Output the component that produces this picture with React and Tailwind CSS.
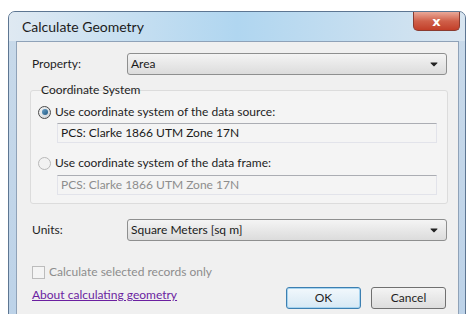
import { FaCaretDown } from 'react-icons/fa'

function Combo({ value }) {
    return (
        <div className="flex-1 h-[22px] flex items-center justify-between pl-[3px] pr-[6px] rounded-[3px] border border-[#8e8f8f] bg-gradient-to-b from-[#f4f4f4] to-[#dcdcdc] text-[#1a1a1a]">
            <span>{value}</span>
            <FaCaretDown className="h-3 w-3 text-[#222]" />
        </div>
    )
}

function TextBox({ value, disabled }) {
    return (
        <div className={`ml-[31px] mr-[10px] h-[20px] flex items-center pl-[3px] border border-[#e2e3ea] border-t-[#abadb3] bg-[#f4f4f4] ${disabled ? 'text-[#8d8d8d]' : 'text-[#1a1a1a]'}`}>
            {value}
        </div>
    )
}

export default function App() {
    return (
        <div className="w-[474px] h-[314px] overflow-hidden bg-white pl-[8px] pt-[11px] text-[12px] font-['Lato',sans-serif]">
            <div className="w-[458px] h-[320px] rounded-t-[7px] border border-[#5d7692] bg-gradient-to-b from-[#c9daea] to-[#bcd2e8] flex flex-col">
                {/* title bar */}
                <div className="h-[29px] shrink-0 flex items-start justify-between rounded-t-[6px] bg-gradient-to-r from-[#dfe9f2] via-[#b0d6f0] to-[#d8e5f0]">
                    <span className="pl-[13px] pt-[6px] text-[14px] text-[#1c1c1c] leading-[18px]">Calculate Geometry</span>
                    <div className="mr-[5px] w-[47px] h-[19px] flex items-center justify-center rounded-b-[5px] border border-t-0 border-[#8a3b30] bg-gradient-to-b from-[#e9a898] via-[#d0604a] to-[#c23e28] text-white font-bold text-[13px] leading-none font-['DejaVu_Sans',sans-serif]">
                        x
                    </div>
                </div>

                {/* client area */}
                <div className="flex-1 ml-[7px] mr-[6px] border border-[#8fa2b8] bg-[#f0f0f0] pl-[15px] pr-[11px] pt-[11px] text-[#1e1e1e]">
                    <div className="flex items-center">
                        <span className="w-[95px]">Property:</span>
                        <Combo value="Area" />
                    </div>

                    <div className="relative mt-[15px] -ml-[2px] mr-[-1px] h-[114px] rounded-[3px] border border-[#dcdcdc] bg-[#f4f4f4] pt-[13px] pl-[7px]">
                        <span className="absolute -top-[9px] left-[9px] px-[1px] leading-[16px] text-[#1e1e1e]">Coordinate System</span>
                        <div className="flex items-center gap-[4px] leading-[16px]">
                            <span className="w-[13px] h-[13px] rounded-full border border-[#4a4a4a] bg-gradient-to-br from-[#f5f5f5] to-[#cfd3d8] flex items-center justify-center">
                                <span className="w-[6px] h-[6px] rounded-full bg-gradient-to-br from-[#6aa1c8] to-[#1e5a84]" />
                            </span>
                            <span>Use coordinate system of the data source:</span>
                        </div>
                        <div className="mt-[3px] -ml-[12px]">
                            <TextBox value="PCS: Clarke 1866 UTM Zone 17N" />
                        </div>
                        <div className="mt-[12px] flex items-center gap-[4px] leading-[16px]">
                            <span className="w-[13px] h-[13px] rounded-full border border-[#b8b8b8] bg-[#f2f2f2]" />
                            <span>Use coordinate system of the data frame:</span>
                        </div>
                        <div className="mt-[4px] -ml-[12px]">
                            <TextBox value="PCS: Clarke 1866 UTM Zone 17N" disabled />
                        </div>
                    </div>

                    <div className="mt-[15px] flex items-center">
                        <span className="w-[95px]">Units:</span>
                        <Combo value="Square Meters [sq m]" />
                    </div>

                    <div className="mt-[23px] flex items-start justify-between">
                        <div className="flex flex-col">
                            <div className="flex items-center gap-[4px] text-[#8d8d8d] leading-[16px]">
                                <span className="w-[13px] h-[13px] border border-[#bcbcbc] bg-[#f4f4f4]" />
                                <span>Calculate selected records only</span>
                            </div>
                            <span className="mt-[7px] text-[#6b1fa0] underline leading-[16px]">About calculating geometry</span>
                        </div>
                        <div className="flex gap-[10px] pt-[23px] mr-[1px]">
                            <div className="w-[75px] h-[22px] flex items-center justify-center rounded-[3px] border border-[#3c7fb1] bg-gradient-to-b from-[#f2f8fc] to-[#d6e8f4] shadow-[inset_0_0_0_1px_#a6d3ef]">OK</div>
                            <div className="w-[75px] h-[22px] flex items-center justify-center rounded-[3px] border border-[#707070] bg-gradient-to-b from-[#f4f4f4] to-[#dddddd]">Cancel</div>
                        </div>
                    </div>
                </div>
            </div>
        </div>
    )
}
